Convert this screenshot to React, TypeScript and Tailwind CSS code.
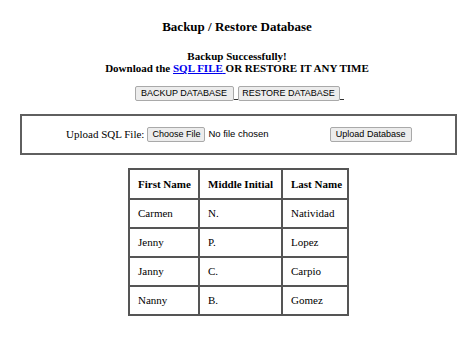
const ROWS = [
  { first: "Carmen", middle: "N.", last: "Natividad" },
  { first: "Jenny", middle: "P.", last: "Lopez" },
  { first: "Janny", middle: "C.", last: "Carpio" },
  { first: "Nanny", middle: "B.", last: "Gomez" },
];

const btn =
  "h-[15px] flex items-center justify-center whitespace-nowrap border border-[#a9a9a9] rounded-[2px] bg-[#ececec] text-[9px] leading-none text-black no-underline font-['Liberation_Sans',Arial,sans-serif]";

export default function App() {
  return (
    <div className="w-[474px] h-[338px] bg-white text-black font-['Liberation_Serif','Times_New_Roman',serif] overflow-hidden">
      <div className="pt-[19px] text-center text-[13px] font-bold leading-[16px]">
        Backup / Restore Database
      </div>

      <div className="mt-[15px] text-center text-[11px] font-bold leading-[12px]">
        <div>Backup Successfully!</div>
        <div>
          Download the{" "}
          <a href="#" className="text-[#0000ee] underline">
            SQL FILE{" "}
          </a>
          OR RESTORE IT ANY TIME
        </div>
      </div>

      {/* Backup / restore actions */}
      <div className="mt-[12px] flex justify-center items-end pl-[4px]">
        <a href="#" className="flex items-end">
          <span className={`${btn} w-[99px]`}>BACKUP DATABASE</span>
          <span className="w-[4px] h-[1px] bg-[#333] mb-[1px]" />
        </a>
        <a href="#" className="flex items-end">
          <span className={`${btn} w-[102px]`}>RESTORE DATABASE</span>
          <span className="w-[4px] h-[1px] bg-[#333] mb-[1px]" />
        </a>
      </div>

      {/* Upload form */}
      <div className="mt-[13px] ml-[20px] w-[437px] h-[41px] border-2 border-[#5f5f5f] flex items-center text-[11px]">
        <span className="ml-[44px]">Upload SQL File:</span>
        <span className={`${btn} ml-[3px] w-[58px]`}>Choose File</span>
        <span className="ml-[3px] text-[9.5px] font-['Liberation_Sans',Arial,sans-serif]">No file chosen</span>
        <span className={`${btn} ml-[61px] w-[82px]`}>Upload Database</span>
      </div>

      {/* Records */}
      <table className="mt-[13px] ml-[128px] w-[221px] border-collapse border-2 border-[#555] text-[11px]">
        <thead>
          <tr className="h-[30px]">
            <th className="w-[70px] border-2 border-[#555] text-left pl-[8px] font-bold">First Name</th>
            <th className="w-[83px] border-2 border-[#555] text-left pl-[8px] font-bold">Middle Initial</th>
            <th className="border-2 border-[#555] text-left pl-[8px] font-bold">Last Name</th>
          </tr>
        </thead>
        <tbody>
          {ROWS.map((r) => (
            <tr key={r.first} className="h-[29px]">
              <td className="border-2 border-[#555] pl-[8px]">{r.first}</td>
              <td className="border-2 border-[#555] pl-[8px]">{r.middle}</td>
              <td className="border-2 border-[#555] pl-[8px]">{r.last}</td>
            </tr>
          ))}
        </tbody>
      </table>
    </div>
  );
}
